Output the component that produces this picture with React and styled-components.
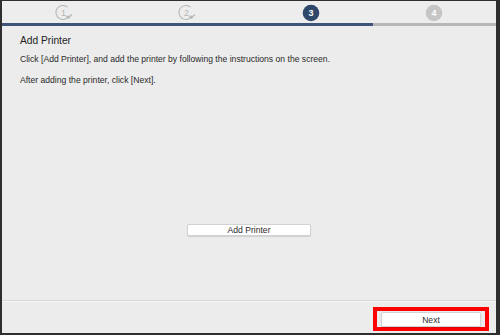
import React from 'react'
import styled, { createGlobalStyle } from 'styled-components'

const Global = createGlobalStyle`
  html, body { margin: 0; padding: 0; background: #ececec; }
  body { font-family: "Liberation Sans", Arial, Helvetica, sans-serif; }
`

const steps = [
  { n: 1, state: 'done' },
  { n: 2, state: 'done' },
  { n: 3, state: 'current' },
  { n: 4, state: 'todo' },
]

function DoneIcon({ n }) {
  return (
    <svg width="18" height="18" viewBox="0 0 18 18">
      <path d="M14.2 11.6 A7 7 0 1 1 12.6 3.2" fill="none" stroke="#b4b4b4" strokeWidth="1.1" />
      <path d="M11.4 12.2 L13.4 14.4 L16.6 10.6" fill="none" stroke="#b4b4b4" strokeWidth="1.2" strokeLinecap="round" strokeLinejoin="round" />
      <text x="8.6" y="12" textAnchor="middle" fontSize="9" fill="#b4b4b4" fontFamily="Liberation Sans, Arial, sans-serif">{n}</text>
    </svg>
  )
}

function FilledIcon({ n, color }) {
  return (
    <svg width="18" height="18" viewBox="0 0 18 18">
      <circle cx="9" cy="9" r="8.3" fill={color} />
      <text x="9" y="12.2" textAnchor="middle" fontSize="9" fontWeight="bold" fill="#ffffff" fontFamily="Liberation Sans, Arial, sans-serif">{n}</text>
    </svg>
  )
}

export default function App() {
  return (
    <>
      <Global />
      <Frame>
        <Header>
          {steps.map(s => (
            <StepCell key={s.n}>
              {s.state === 'done' && <DoneIcon n={s.n} />}
              {s.state === 'current' && <FilledIcon n={s.n} color="#2f4769" />}
              {s.state === 'todo' && <FilledIcon n={s.n} color="#c6c6c6" />}
            </StepCell>
          ))}
        </Header>
        <Progress>
          <ProgressFill style={{ width: `${(3 / 4) * 100}%` }} />
        </Progress>
        <Content>
          <Title>Add Printer</Title>
          <Text>Click [Add Printer], and add the printer by following the instructions on the screen.</Text>
          <Text $gap={11}>After adding the printer, click [Next].</Text>
          <Center>
            <Button $width={124}>Add Printer</Button>
          </Center>
        </Content>
        <Footer>
          <Highlight>
            <Button $width={100} $height={15}>Next</Button>
          </Highlight>
        </Footer>
      </Frame>
    </>
  )
}

const Frame = styled.div`
  width: 500px;
  height: 335px;
  box-sizing: border-box;
  border-style: solid;
  border-color: #2e2e2e;
  border-width: 1px 4px 2px 2px;
  background: #ececec;
  display: flex;
  flex-direction: column;
  color: #262626;
`

const Header = styled.div`
  height: 22px;
  display: flex;
  background: #ededed;
`

const StepCell = styled.div`
  flex: 1;
  display: flex;
  align-items: center;
  justify-content: center;
  padding-top: 1px;
`

const Progress = styled.div`
  height: 3px;
  background: #b7b7b7;
`

const ProgressFill = styled.div`
  height: 100%;
  background: #3d5478;
`

const Content = styled.div`
  flex: 1;
  display: flex;
  flex-direction: column;
  padding: 9px 18px 0;
  border-bottom: 1px solid #d6d6d6;
  box-shadow: 0 1px 0 #f6f6f6;
`

const Title = styled.div`
  font-size: 10.2px;
  line-height: 12px;
  color: #1e1e1e;
  margin-bottom: 7px;
`

const Text = styled.div`
  font-size: 8.6px;
  line-height: 10px;
  color: #2a2a2a;
  margin-top: ${p => p.$gap || 0}px;
`

const Center = styled.div`
  margin-top: auto;
  padding-bottom: 64px;
  display: flex;
  justify-content: center;
`

const Button = styled.div`
  width: ${p => p.$width}px;
  height: ${p => p.$height || 12}px;
  box-sizing: border-box;
  background: #ffffff;
  border: 1px solid #d2d2d2;
  border-radius: 2px;
  box-shadow: 0 1px 1px rgba(0, 0, 0, 0.12);
  display: flex;
  align-items: center;
  justify-content: center;
  font-size: 8.6px;
  color: #2a2a2a;
`

const Footer = styled.div`
  height: 32px;
  display: flex;
  justify-content: flex-end;
  align-items: flex-start;
  padding: 6px 7px 0 0;
  box-sizing: border-box;
`

const Highlight = styled.div`
  border: 4px solid #ff0000;
  padding: 1px 4px 0 4px;
`
